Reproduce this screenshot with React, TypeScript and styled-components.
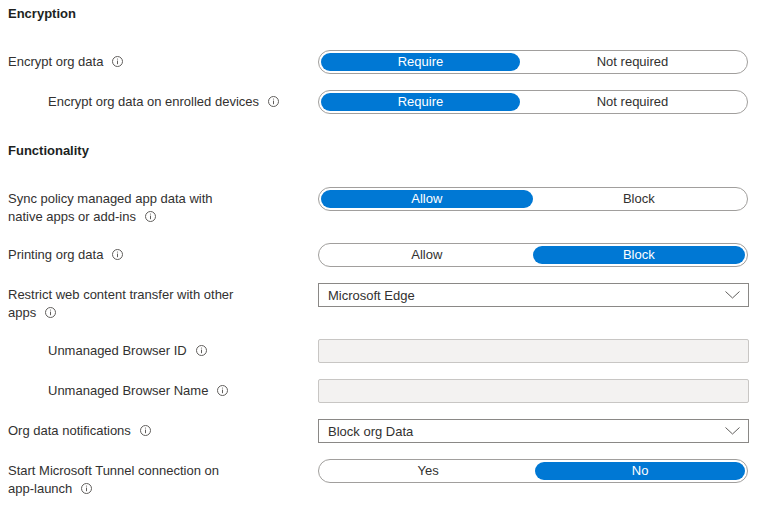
import React from 'react';
import styled, { createGlobalStyle } from 'styled-components';

const GlobalStyle = createGlobalStyle`
  body {
    margin: 0;
    background: #ffffff;
    font-family: 'Liberation Sans', Arial, sans-serif;
    font-size: 13px;
    color: #323130;
  }
`;

const Page = styled.div`
  padding: 5px 20px 0 8px;
  width: 768px;
  box-sizing: border-box;
`;

const SectionTitle = styled.div<{ $first?: boolean }>`
  font-weight: 700;
  line-height: 18px;
  margin-top: ${(p) => (p.$first ? '0' : '28px')};
  margin-bottom: 27px;
  color: #201f1e;
`;

const Row = styled.div`
  display: grid;
  grid-template-columns: 310px 1fr;
  align-items: start;
  margin-bottom: 16px;
`;

const Label = styled.div<{ $indent?: boolean }>`
  padding: 3px 0 1px ${(p) => (p.$indent ? '40px' : '0')};
  line-height: 18px;
  max-width: ${(p) => (p.$indent ? 'none' : '240px')};
`;

const InfoMark = styled.span`
  display: inline-block;
  width: 11px;
  height: 11px;
  margin-left: 9px;
  vertical-align: -1px;
`;

const ToggleTrack = styled.div`
  display: flex;
  height: 24px;
  box-sizing: border-box;
  border: 1px solid #a19f9d;
  border-radius: 12px;
  padding: 2px;
`;

const ToggleOption = styled.div<{ $active?: boolean }>`
  flex: 1 1 auto;
  display: flex;
  align-items: center;
  justify-content: center;
  border-radius: 10px;
  background: ${(p) => (p.$active ? '#0078d4' : 'transparent')};
  color: ${(p) => (p.$active ? '#ffffff' : '#323130')};
  line-height: 18px;
`;

const Select = styled.div`
  display: flex;
  align-items: center;
  justify-content: space-between;
  height: 24px;
  box-sizing: border-box;
  border: 1px solid #8a8886;
  padding: 0 8px 0 9px;
  margin-right: -1px;
`;

const DisabledInput = styled.div`
  height: 24px;
  box-sizing: border-box;
  border: 1px solid #c8c6c4;
  border-radius: 2px;
  background: #f3f2f1;
  margin-right: -1px;
`;

function Info() {
  return (
    <InfoMark>
      <svg width="11" height="11" viewBox="0 0 11 11">
        <circle cx="5.5" cy="5.5" r="5" fill="none" stroke="#605e5c" strokeWidth="1" />
        <line x1="5.5" y1="4.6" x2="5.5" y2="8.2" stroke="#605e5c" strokeWidth="1" />
        <circle cx="5.5" cy="3" r="0.6" fill="#605e5c" />
      </svg>
    </InfoMark>
  );
}

function Chevron() {
  return (
    <svg width="15" height="8" viewBox="0 0 15 8">
      <polyline points="0.5,0.5 7.5,7 14.5,0.5" fill="none" stroke="#605e5c" strokeWidth="1" />
    </svg>
  );
}

function Toggle({ options, active }: { options: string[]; active: number }) {
  return (
    <ToggleTrack>
      {options.map((o, i) => (
        <ToggleOption key={o} $active={i === active}>
          {o}
        </ToggleOption>
      ))}
    </ToggleTrack>
  );
}

export default function App() {
  return (
    <Page>
      <GlobalStyle />
      <SectionTitle $first>Encryption</SectionTitle>
      <Row>
        <Label>
          Encrypt org data
          <Info />
        </Label>
        <Toggle options={['Require', 'Not required']} active={0} />
      </Row>
      <Row>
        <Label $indent>
          Encrypt org data on enrolled devices
          <Info />
        </Label>
        <Toggle options={['Require', 'Not required']} active={0} />
      </Row>

      <SectionTitle>Functionality</SectionTitle>
      <Row>
        <Label>
          Sync policy managed app data with native apps or add-ins
          <Info />
        </Label>
        <Toggle options={['Allow', 'Block']} active={0} />
      </Row>
      <Row>
        <Label>
          Printing org data
          <Info />
        </Label>
        <Toggle options={['Allow', 'Block']} active={1} />
      </Row>
      <Row>
        <Label>
          Restrict web content transfer with other apps
          <Info />
        </Label>
        <Select>
          <span>Microsoft Edge</span>
          <Chevron />
        </Select>
      </Row>
      <Row>
        <Label $indent>
          Unmanaged Browser ID
          <Info />
        </Label>
        <DisabledInput />
      </Row>
      <Row>
        <Label $indent>
          Unmanaged Browser Name
          <Info />
        </Label>
        <DisabledInput />
      </Row>
      <Row>
        <Label>
          Org data notifications
          <Info />
        </Label>
        <Select>
          <span>Block org Data</span>
          <Chevron />
        </Select>
      </Row>
      <Row>
        <Label>
          Start Microsoft Tunnel connection on app-launch
          <Info />
        </Label>
        <Toggle options={['Yes', 'No']} active={1} />
      </Row>
    </Page>
  );
}
